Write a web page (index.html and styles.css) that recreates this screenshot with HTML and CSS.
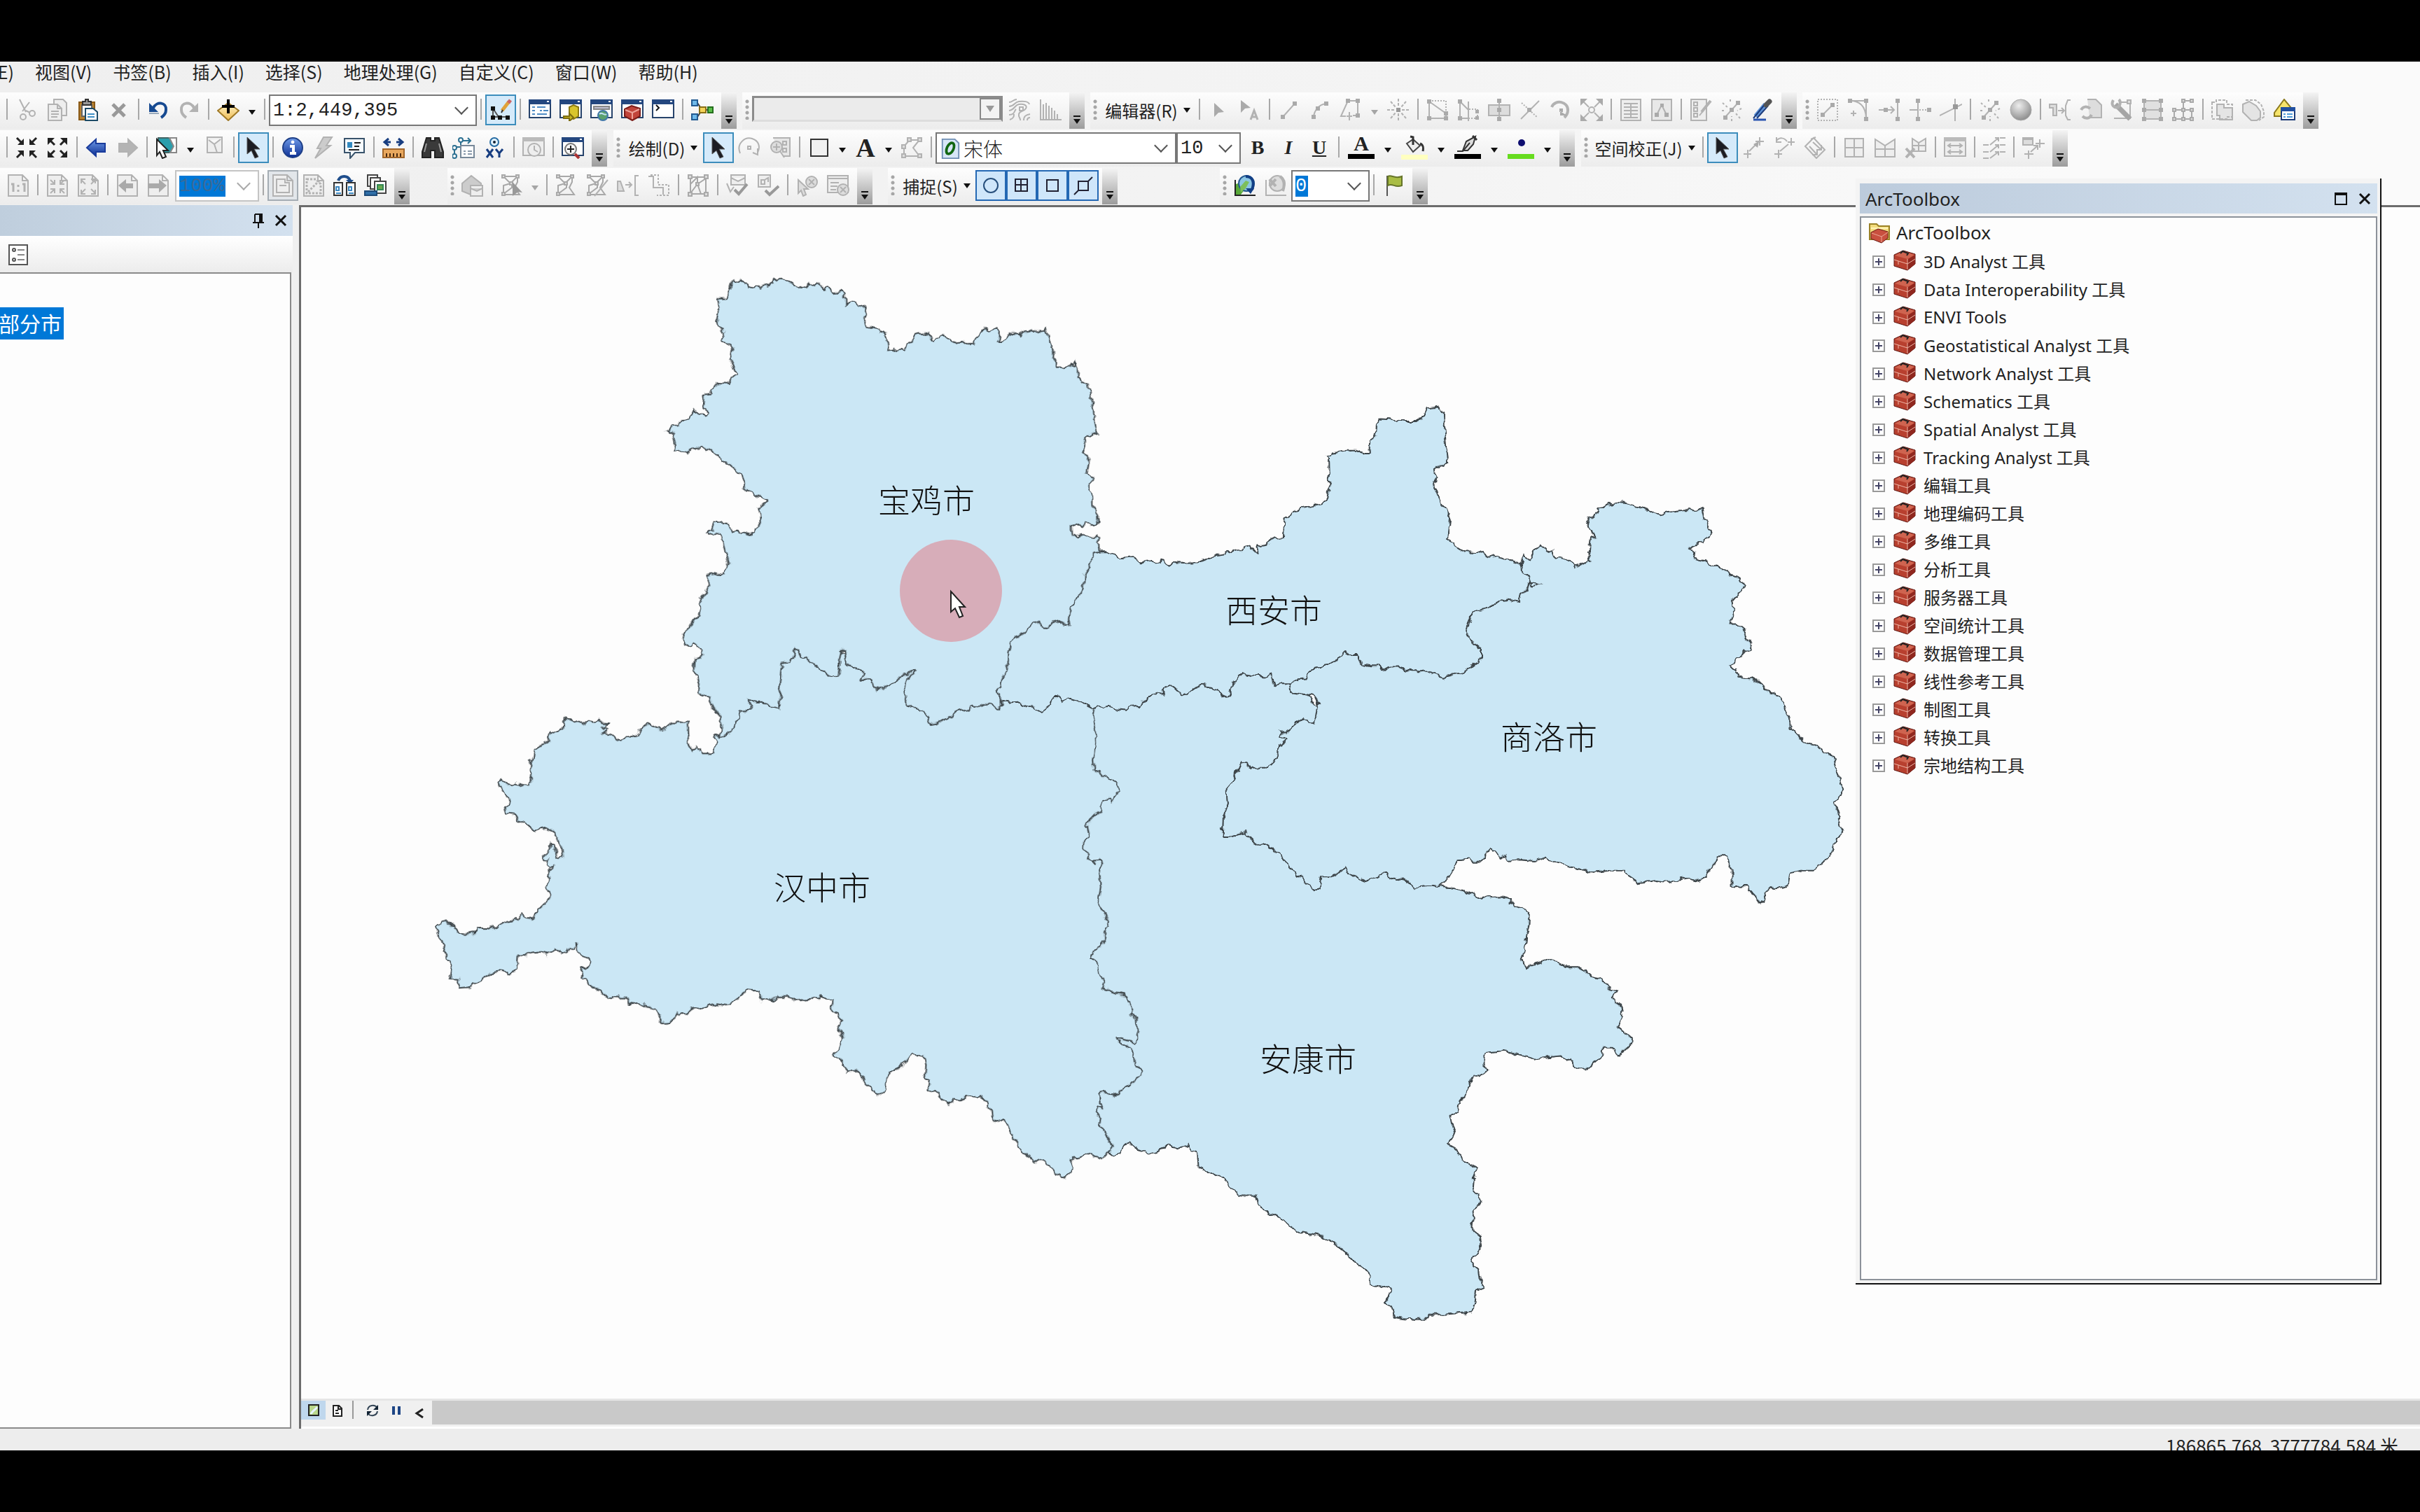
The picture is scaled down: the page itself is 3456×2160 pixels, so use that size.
FILE: index.html
```html
<!DOCTYPE html>
<html lang="zh-CN">
<head>
<meta charset="utf-8">
<title>ArcMap</title>
<link rel="stylesheet" href="styles.css">
</head>
<body>
<svg class="sprite" aria-hidden="true">
<defs>
<linearGradient id="gBlue" x1="0" y1="0" x2="0" y2="1"><stop offset="0" stop-color="#6f9be8"/><stop offset="1" stop-color="#0d2f94"/></linearGradient>
<linearGradient id="gGold" x1="0" y1="0" x2="0" y2="1"><stop offset="0" stop-color="#fff3c8"/><stop offset="1" stop-color="#eebd55"/></linearGradient>
<radialGradient id="gBall" cx=".4" cy=".3" r=".7"><stop offset="0" stop-color="#eee"/><stop offset="1" stop-color="#8e8e8e"/></radialGradient>
</defs>
<symbol id="cut" viewBox="0 0 32 32"><path d="M6 1l9 18M20 5l-10 13"/><circle cx="11" cy="26" r="4"/><circle cx="24" cy="21" r="4"/><path d="M15 17l6 3"/></symbol>
<symbol id="copy" viewBox="0 0 32 32"><path fill="#eee" d="M11 1h13l5 5v18H11z"/><path fill="#eee" d="M3 8h13l6 6v17H3zM16 8v6h6M7 18h11M7 22h11M7 26h9"/></symbol>
<symbol id="paste" viewBox="0 0 32 32"><path fill="#b9822f" stroke="#8a5a18" d="M3 5h22v25H3z"/><path fill="#fff" stroke="#666" d="M7 9h14v16H7z"/><path fill="#999" stroke="#333" d="M8 4h4V1h4v3h4v5H8z"/><path fill="#fff" stroke="#1c4a66" d="M12 14h11l6 5v12H12z"/><path stroke="#3f8fc5" d="M15 22h10M15 26h10"/></symbol>
<symbol id="del" viewBox="0 0 32 32"><path stroke="#999" stroke-width="5" d="M7 8l17 17M24 8L7 25"/></symbol>
<symbol id="undo" viewBox="0 0 32 32"><path stroke="#174a91" stroke-width="4" d="M9 13c5-10 19-8 18 3c0 6-4 9-7 11"/><path fill="#174a91" stroke="none" d="M3 6v13h13z"/><path stroke="#9ab" d="M3 21h14"/></symbol>
<symbol id="redo" viewBox="0 0 32 32"><path stroke-width="4" d="M23 13c-5-10-19-8-18 3c0 6 4 9 7 11"/><path fill="#b2b2b2" stroke="none" d="M29 6v13H16z"/></symbol>
<symbol id="add" viewBox="0 0 32 32"><path fill="url(#gGold)" stroke="#a07a28" d="M16 6l15 11-15 14L1 17z"/><path stroke="#000" stroke-width="4" d="M16 1v20M7 11h18"/></symbol>
<symbol id="edt" viewBox="0 0 32 32"><path stroke="#555" d="M5 14l8 12h14M5 26h8M5 14v12"/><path fill="#111" stroke="none" d="M2 11h6v6H2zM2 24h6v6H2zM12 24h6v6h-6zM23 24h6v6h-6z"/><path stroke="#e0a23a" stroke-width="5" d="M28 4L18 17"/><path stroke="#c66" stroke-width="5" d="M30 2l-3 4"/><path stroke="#333" d="M17 20l2-4"/></symbol>
<symbol id="win" viewBox="0 0 32 32"><path fill="#fff" stroke="#27436b" d="M1 3h30v24H1z"/><path fill="#24477f" stroke="none" d="M0 1h32v7H0z"/><path stroke="#fff" d="M26 4h3"/></symbol>
<symbol id="toc" viewBox="0 0 32 32"><use href="#win" width="32" height="32"/><path stroke="#4d8bc4" d="M5 12h4M12 12h12M5 17h4M16 17h3M21 17h7M5 22h4M12 22h14"/></symbol>
<symbol id="cat" viewBox="0 0 32 32"><use href="#win" width="32" height="32"/><path fill="#d9c52c" stroke="#8c7a12" d="M14 12l6-3 7 3v13l-7 4-6-4z"/><path fill="#c8b820" stroke="#7c6c10" d="M6 25h8v-4l6 6-6 5v-4H6z"/></symbol>
<symbol id="srch" viewBox="0 0 32 32"><use href="#win" width="32" height="32"/><path fill="#bbc" stroke="#888" d="M5 11h22v4H5z"/><circle cx="18" cy="24" r="7" fill="#5aa06f" stroke="#4178a8"/><path stroke="#bfe0f0" d="M13 22c4-4 7 3 10 0"/></symbol>
<symbol id="tbxw" viewBox="0 0 32 32"><use href="#win" width="32" height="32"/><path fill="#c1443a" stroke="#7b1c18" d="M5 15l10-5 12 4v11l-11 6-11-6z"/><path stroke="#eda298" d="M6 16l10 4 10-5M16 20v9"/></symbol>
<symbol id="py" viewBox="0 0 32 32"><use href="#win" width="32" height="32"/><path stroke="#111" d="M6 9l4 4-4 4"/></symbol>
<symbol id="model" viewBox="0 0 32 32"><path stroke="#444" d="M9 6l6 9M9 26l6-9M20 16h4"/><path fill="#6eb9ea" stroke="#235b92" d="M1 2h8v8H1zM1 22h8v8H1z"/><path fill="#f4d35a" stroke="#8a7016" d="M12 12h9v8h-9z"/><path fill="#5cbf4a" stroke="#256e1e" d="M24 12h7v8h-7z"/></symbol>
<symbol id="contour" viewBox="0 0 32 32"><path d="M1 5c5 0 6-4 11-4M1 11c8 0 7-6 14-7s14 0 15 4M1 17c8-1 8-8 14-9s13 1 10 6-9 3-10 8 3 6 2 9M1 23c8 0 7-5 10-8M2 30c6-2 6-5 6-8M16 12h5v5h-5zM22 31c0-6 3-8 9-9M27 31c0-3 1-4 4-4"/></symbol>
<symbol id="hist" viewBox="0 0 32 32"><path d="M2 1v29h30M6 8v22M10 6v24M14 10v20M18 13v17M22 17v13M26 22v8"/></symbol>
<symbol id="play" viewBox="0 0 32 32"><path fill="#aaa" stroke="none" d="M9 6v20l6-6 8-1z"/></symbol>
<symbol id="playA" viewBox="0 0 32 32"><path fill="#aaa" stroke="none" d="M3 2v18l6-6 8-1z"/><path stroke-width="3" d="M17 30l5-13 5 13M19 26h7"/></symbol>
<symbol id="ln" viewBox="0 0 32 32"><path d="M7 26L24 7"/><path fill="#aaa" stroke="none" d="M4 23h6v6H4zM21 4h6v6h-6z"/></symbol>
<symbol id="arc" viewBox="0 0 32 32"><path d="M7 26c1-10 8-18 18-19"/><path fill="#aaa" stroke="none" d="M4 23h6v6H4zM22 4h6v6h-6zM10 11h6v6h-6z"/></symbol>
<symbol id="trap" viewBox="0 0 32 32"><path d="M9 25H2L12 3h14v21h-7M14 19v12M10 25h8"/><path fill="#aaa" stroke="none" d="M9 0h6v6H9zM23 0h6v6h-6zM23 21h6v6h-6z"/></symbol>
<symbol id="spark" viewBox="0 0 32 32"><path stroke-dasharray="4 2" d="M16 0v11M16 21v11M0 16h11M21 16h11M5 4l7 8M27 4l-7 8M5 28l7-8M27 28l-7-8"/><path fill="#999" stroke="none" d="M13 13h6v6h-6z"/></symbol>
<symbol id="shp" viewBox="0 0 32 32"><path d="M4 4l24 17v7H4z"/><path stroke-dasharray="2 2" d="M4 3h24v18"/><path fill="#aaa" stroke="none" d="M1 1h6v6H1zM1 25h6v6H1zM25 18h6v6h-6zM25 25h6v6h-6z"/></symbol>
<symbol id="shp2" viewBox="0 0 32 32"><path d="M4 4l12 12M4 4v24h11M16 4v28"/><path stroke-dasharray="2 2" d="M17 15h12v13H17"/><path fill="#aaa" stroke="none" d="M1 1h6v6H1zM1 25h6v6H1zM26 16h5v5h-5zM26 25h5v5h-5z"/></symbol>
<symbol id="split" viewBox="0 0 32 32"><path fill="#ddd" d="M1 9h30v15H1zM16 3v27"/><path fill="#aaa" stroke="none" d="M13 0h6v6h-6zM13 26h6v6h-6zM13 13h6v6h-6z"/></symbol>
<symbol id="diag" viewBox="0 0 32 32"><path d="M3 29L29 3"/><path stroke-dasharray="2 2" d="M4 6l10 9M18 19l9 8"/><path fill="#aaa" stroke="none" d="M12 13h6v6h-6z"/></symbol>
<symbol id="rot" viewBox="0 0 32 32"><path stroke-width="4" d="M3 12c5-12 24-8 23 5 0 4-2 7-5 10"/><path fill="#aaa" stroke="none" d="M14 14h5v5h-5zM15 24h10l-10-6z"/></symbol>
<symbol id="expand" viewBox="0 0 32 32"><path d="M3 3l9 9M29 3l-9 9M3 29l9-9M29 29l-9-9"/><path fill="#aaa" stroke="none" d="M0 0h10L0 10zM32 0H22l10 10zM0 32h10L0 22zM32 32H22l10-10z"/><circle cx="16" cy="16" r="4"/></symbol>
<symbol id="tbl" viewBox="0 0 32 32"><path fill="#eee" d="M2 1h28v30H2zM6 7h20M6 12h20M6 17h20M6 22h20M6 27h20M16 6v20"/></symbol>
<symbol id="sk" viewBox="0 0 32 32"><path fill="#e8e8e8" d="M2 1h28v30H2zM9 23l7-14 7 14"/><path fill="#aaa" stroke="none" d="M6 20h6v6H6zM20 20h6v6h-6zM14 7h5v5h-5z"/></symbol>
<symbol id="crt" viewBox="0 0 32 32"><path fill="#eee" d="M2 1h22v30H2z"/><path d="M6 5h5v5H6zM6 13h5v5H6zM6 21h5v5H6zM14 24l4-5"/><path stroke-width="4" d="M17 19L30 3"/></symbol>
<symbol id="lns" viewBox="0 0 32 32"><path d="M7 26L25 6"/><path stroke-dasharray="3 3" d="M3 6l8 7M14 1v6M30 14l-6 3M16 32v-7M28 28l-7-8M2 17h6"/><path fill="#aaa" stroke="none" d="M4 24h6v6H4zM22 3h6v6h-6zM13 13h6v6h-6z"/></symbol>
<symbol id="drop" viewBox="0 0 32 32"><path stroke="#5d92d8" stroke-width="6" d="M6 25L20 8"/><path stroke="#1c3c7c" d="M3 28L21 6M8 28L24 10"/><path stroke="#555" stroke-width="7" stroke-linecap="round" d="M21 9l5-5"/><path stroke="#2a55b0" stroke-width="3" d="M3 30h18"/></symbol>
<symbol id="dl" viewBox="0 0 32 32"><path stroke-dasharray="2 2" d="M2 1h28v30H2z"/><path d="M9 23L23 9"/><path fill="#aaa" stroke="none" d="M6 20h6v6H6zM20 6h6v6h-6z"/></symbol>
<symbol id="fil" viewBox="0 0 32 32"><path d="M4 3h23v26M4 3c14 0 22 8 23 24M5 21h8M9 17v8"/><path fill="#aaa" stroke="none" d="M1 0h6v6H1zM24 0h6v6h-6zM24 26h6v6h-6z"/></symbol>
<symbol id="ext" viewBox="0 0 32 32"><path d="M1 16h22M18 11l5 5-5 5M28 3v26"/><path fill="#aaa" stroke="none" d="M25 0h6v6h-6zM25 26h6v6h-6zM8 13h6v6H8z"/></symbol>
<symbol id="trm" viewBox="0 0 32 32"><path d="M1 16h13M13 3v26"/><path stroke-dasharray="2 2" d="M15 16h14"/><path fill="#aaa" stroke="none" d="M10 0h6v6h-6zM10 26h6v6h-6zM26 13h6v6h-6z"/></symbol>
<symbol id="isec" viewBox="0 0 32 32"><path d="M0 24L32 8M22 0v32"/><path fill="#999" stroke="none" d="M19 8h7v7h-7z"/></symbol>
<symbol id="ball" viewBox="0 0 32 32"><circle cx="16" cy="16" r="15" fill="url(#gBall)" stroke="#aaa" stroke-width="1"/></symbol>
<symbol id="aln" viewBox="0 0 32 32"><path fill="#ddd" d="M1 8h10v16H6V13H1z"/><path d="M13 17h8M18 13l4 4-4 4M31 2h-4l-3 8v14l3 6h4"/></symbol>
<symbol id="rep" viewBox="0 0 32 32"><path fill="#ddd" d="M11 1h12l8 8v18H14"/><path stroke-width="4" d="M2 16c3-6 9-5 13-2M17 23c-3 6-9 6-13 2"/></symbol>
<symbol id="wr" viewBox="0 0 32 32"><path d="M5 28h23V5H12"/><path stroke="#a5a5a5" stroke-width="7" d="M7 8l21 21"/><path stroke-width="4" d="M4 2c-4 7 1 12 7 10 4-4 3-9 1-11"/><path fill="#ddd" d="M24 2h5v5h-5z"/></symbol>
<symbol id="box3" viewBox="0 0 32 32"><path fill="#e0e0e0" d="M4 3h24v26H4zM4 16h24"/><path fill="#aaa" stroke="none" d="M1 0h6v6H1zM25 0h6v6h-6zM1 13h6v6H1zM25 13h6v6h-6zM1 26h6v6H1zM25 26h6v6h-6z"/></symbol>
<symbol id="net" viewBox="0 0 32 32"><path stroke="#aaa" d="M3 16h25v13H3zM16 3v26M16 3h12"/><path fill="#ddd" stroke="#aaa" d="M1 14h4v4H1zM1 27h4v4H1zM14 14h4v4h-4zM14 27h4v4h-4zM26 14h4v4h-4zM26 27h4v4h-4zM14 1h4v4h-4zM26 1h4v4h-4z"/></symbol>
<symbol id="un" viewBox="0 0 32 32"><path fill="#e4e4e4" d="M8 8h10v5h12v17H12v-6H8z"/><path stroke-dasharray="4 2" d="M1 5h6V2h15v6h8v18h-8v3H1z"/></symbol>
<symbol id="hex" viewBox="0 0 32 32"><path fill="#e4e4e4" d="M1 8l9-4 10 6 6 8v9l-5 4h-8L1 19z"/><path stroke-dasharray="4 2" d="M5 2h14l8 6 4 10v8l-7 5"/></symbol>
<symbol id="house" viewBox="0 0 32 32"><path fill="#f6e46c" stroke="#8c7a1c" d="M16 1L2 20v5h24V13z"/><path fill="#fff" stroke="#1c3b78" d="M12 14h19v16H12z"/><path fill="#2150a0" stroke="none" d="M11 12h21v6H11z"/><path stroke="#4d9bd8" d="M15 22h3M20 22h8M15 26h3M20 26h8"/></symbol>
<symbol id="zin" viewBox="0 0 32 32"><path stroke="#222" stroke-width="3" d="M2 2l8 8M30 2l-8 8M2 30l8-8M30 30l-8-8"/><path fill="#222" stroke="none" d="M12 3v9H3zM20 3v9h9zM12 29v-9H3zM20 29v-9h9z"/></symbol>
<symbol id="zout" viewBox="0 0 32 32"><path stroke="#222" stroke-width="3" d="M4 4l8 8M28 4l-8 8M4 28l8-8M28 28l-8-8"/><path fill="#222" stroke="none" d="M2 2h10L2 12zM30 2H20l10 10zM2 30h10L2 20zM30 30H20l10-10z"/></symbol>
<symbol id="back" viewBox="0 0 32 32"><path fill="url(#gBlue)" stroke="#1a3c9c" d="M2 16L15 4v6h13v12H15v6z"/></symbol>
<symbol id="fwd" viewBox="0 0 32 32"><path fill="#b4b4b4" d="M30 16L17 4v6H4v12h13v6z"/></symbol>
<symbol id="self" viewBox="0 0 32 32"><path fill="#2b9eac" stroke="#466" d="M4 2h26v21H4z"/><path fill="#fff" stroke="#888" d="M20 2h10v21h-9l5-9z"/><path fill="#fff" stroke="#222" d="M2 4l16 16h-7l4 9-5 2-4-9-4 5z"/></symbol>
<symbol id="clr" viewBox="0 0 32 32"><path fill="#eee" d="M6 1h21v22H6zM8 5l8 6 9-7M16 11l4 12"/></symbol>
<symbol id="cur" viewBox="0 0 32 32"><path fill="#1c1c22" stroke="#555" stroke-width="1" d="M7 1l18 17h-8l6 11-5 2-5-11-6 5z"/></symbol>
<symbol id="info" viewBox="0 0 32 32"><circle cx="16" cy="16" r="14" fill="url(#gBlue)" stroke="#1e3f87"/><path stroke="#fff" stroke-width="4" d="M12 14h5v9M12 24h9"/><circle cx="16" cy="8" r="2" fill="#fff" stroke="#fff" stroke-width="1"/></symbol>
<symbol id="bolt" viewBox="0 0 32 32"><path fill="#ccc" d="M16 1h12l-8 12h6L4 31l8-14H7z"/></symbol>
<symbol id="pop" viewBox="0 0 32 32"><path fill="#f5faff" stroke="#39536b" d="M2 3h28v20H17l-7 8v-8H2z"/><path fill="#338ac0" stroke="none" d="M6 8h7v8H6z"/><path stroke="#222" d="M16 9h9M16 14h7M8 19h15"/></symbol>
<symbol id="meas" viewBox="0 0 32 32"><path fill="#e9a85e" stroke="#a0662c" d="M1 18h30v12H1z"/><path stroke="#4a2a10" d="M6 29v-5M11 29v-5M16 29v-5M21 29v-5M26 29v-5"/><path stroke="#173d80" stroke-width="3" d="M4 8h8M20 8h8M9 3L3 8l6 5M23 3l6 5-6 5"/></symbol>
<symbol id="bino" viewBox="0 0 32 32"><path fill="#3a3a3a" stroke="#222" d="M7 2h6v4h6V2h6l6 20v8H19V20h-6v10H1v-8z"/><path stroke="#999" d="M7 10L4 22M25 10l3 12"/></symbol>
<symbol id="route" viewBox="0 0 32 32"><path stroke="#2c7091" d="M3 28V15h9V6h14M22 2l4 4-4 4"/><circle cx="3" cy="28" r="3" fill="#fff" stroke="#2c7091"/><circle cx="3" cy="16" r="3" fill="#fff" stroke="#2c7091"/><circle cx="12" cy="5" r="3" fill="#fff" stroke="#2c7091"/><path fill="#fff" stroke="#789" d="M12 13h19v17H12z"/><path stroke="#89a" d="M16 21h3M22 21h6M16 25h3M22 25h6"/></symbol>
<symbol id="xy" viewBox="0 0 32 32"><circle cx="16" cy="8" r="6" fill="#e2f3ff" stroke="#276ca3"/><circle cx="16" cy="8" r="1" stroke="#123"/><path stroke="#173d80" stroke-width="3" d="M5 18l9 12M14 18L5 30M18 18l5 6 5-6M23 24v6"/></symbol>
<symbol id="clk" viewBox="0 0 32 32"><path fill="#eee" d="M1 3h30v24H1z"/><path fill="#bbb" stroke="none" d="M0 1h32v6H0z"/><circle cx="17" cy="19" r="9" fill="#eee"/><path d="M17 13v6l5 3"/></symbol>
<symbol id="mag" viewBox="0 0 32 32"><use href="#win" width="32" height="32"/><circle cx="13" cy="18" r="8" fill="#f6f6f6" stroke="#777"/><path stroke="#222" d="M13 13v10M8 18h10"/><path stroke="#a33" stroke-width="4" d="M19 25l6 6"/></symbol>
<symbol id="rot2" viewBox="0 0 32 32"><path d="M3 24C-3 10 10 0 20 3s12 12 8 20M28 17v9l-7-3M14 14h4v4h-4z"/></symbol>
<symbol id="zsel" viewBox="0 0 32 32"><path fill="#e6e6e6" d="M6 2h24v26H20"/><path d="M20 7h5v5h-5zM20 17h5v5h-5z"/><circle cx="11" cy="15" r="8" fill="#ddd"/><path d="M11 10v10M6 15h10M16 21l6 9"/></symbol>
<symbol id="rect" viewBox="0 0 32 32"><path fill="#f1f1f1" stroke="#333" d="M4 4h24v24H4z"/></symbol>
<symbol id="vtx" viewBox="0 0 32 32"><path d="M13 5h15M13 5L5 14v14h22l-9-12 9-11"/><path fill="#ddd" d="M10 2h5v5h-5zM25 2h5v5h-5zM2 12h5v5H2zM2 25h5v5H2zM25 25h5v5h-5z"/></symbol>
<symbol id="fnt" viewBox="0 0 32 32"><path fill="#d7e6f7" stroke="#6f8eb4" d="M4 2h19l6 6v23H4z"/><ellipse cx="16" cy="16" rx="5" ry="9" stroke="#161" stroke-width="4" transform="rotate(25 16 16)"/></symbol>
<symbol id="bkt" viewBox="0 0 40 36"><path fill="#ffffc0" stroke="none" d="M1 28h38v7H1z"/><path fill="#eee" stroke="#444" d="M9 12l9-6 10 9-10 9z"/><path stroke="#333" stroke-width="3" d="M18 14V3l-4-1M28 12c5 2 5 6 4 11"/></symbol>
<symbol id="pen" viewBox="0 0 40 36"><path fill="#000" stroke="none" d="M1 27h38v7H1z"/><path fill="#ddd" stroke="#333" d="M13 22l5-13 13-7-3 11-8 9z"/><path stroke="#333" d="M5 23h8l10-12"/><path stroke="#333" stroke-width="3" d="M27 1l6 6"/></symbol>
<symbol id="dot" viewBox="0 0 40 36"><path fill="#66dc1e" stroke="none" d="M1 27h38v7H1z"/><circle cx="21" cy="11" r="5" fill="#0e0e70" stroke="none"/></symbol>
<symbol id="fcol" viewBox="0 0 40 36"><path fill="#000" stroke="none" d="M1 27h38v7H1z"/></symbol>
<symbol id="lk1" viewBox="0 0 32 32"><path d="M2 25h11M8 19v12M19 7h12M25 1v12M10 21L22 9"/><path fill="#aaa" stroke="none" d="M24 7l-2 9-6-5z"/></symbol>
<symbol id="lk2" viewBox="0 0 32 32"><path d="M2 25h11M8 19v12M21 8h10M26 2v11M10 21L22 11M5 6c4-5 11-5 15 1M5 1v7h7"/></symbol>
<symbol id="lk3" viewBox="0 0 32 32"><path d="M10 4l7-3M2 14L14 2l16 17-12 12zM8 14l11 12M13 8l12 11M19 19v7h-7M25 12v7h-7"/></symbol>
<symbol id="g4" viewBox="0 0 32 32"><path fill="#eee" d="M3 3h26v26H3zM16 3v26M3 16h26"/></symbol>
<symbol id="g5" viewBox="0 0 32 32"><path fill="#eee" d="M2 4l14 9L30 4v25H2zM16 13v16M2 18h28"/></symbol>
<symbol id="g6" viewBox="0 0 32 32"><path fill="#eee" d="M11 3l9 6 10-6v18H11zM20 9v12M11 13h19"/><path stroke-width="4" d="M2 17l12 13M14 17L2 30"/></symbol>
<symbol id="lkt" viewBox="0 0 32 32"><path fill="#eee" d="M1 3h30v25H1z"/><path fill="#bbb" stroke="none" d="M0 1h32v6H0z"/><path d="M6 13h20M10 10l-4 3 4 3M22 10l4 3-4 3M6 22h20M10 19l-4 3 4 3M22 19l4 3-4 3"/></symbol>
<symbol id="em" viewBox="0 0 32 32"><path d="M0 12h8M24 2h8M0 22h8M24 12h8M0 31h8M24 22h8M10 12L22 2M10 22l12-10M10 31l12-9M17 2h5v5M17 12h5v5M17 22h5v5"/></symbol>
<symbol id="at" viewBox="0 0 32 32"><path fill="#ddd" d="M1 2h14v10H1z"/><path d="M1 4h14M25 4v12M19 10h13M3 25h13M9 20v12M12 22l9-8M16 13h6v6"/></symbol>
<symbol id="pg" viewBox="0 0 32 32"><path fill="#eee" d="M2 1h20l8 8v22H2zM22 1v8h8"/></symbol>
<symbol id="p11" viewBox="0 0 32 32"><use href="#pg" width="32" height="32"/><path stroke-width="3" d="M6 14h3v11M22 14h3v11M16 15v3M16 22v3"/></symbol>
<symbol id="pin" viewBox="0 0 32 32"><use href="#pg" width="32" height="32"/><path d="M6 8l6 6M26 8l-6 6M6 27l6-6M26 27l-6-6M6 14h6V8M20 8v6h6M6 21h6v6M20 27v-6h6"/></symbol>
<symbol id="pout" viewBox="0 0 32 32"><use href="#pg" width="32" height="32"/><path d="M6 8l6 6M26 8l-6 6M6 27l6-6M26 27l-6-6M6 13V7h6M20 7h6v6M6 22v6h6M20 28h6v-6"/></symbol>
<symbol id="pbk" viewBox="0 0 32 32"><use href="#pg" width="32" height="32"/><path fill="#aaa" stroke="none" d="M3 16l11-9v6h10v7H14v6z"/></symbol>
<symbol id="pfw" viewBox="0 0 32 32"><use href="#pg" width="32" height="32"/><path fill="#aaa" stroke="none" d="M28 16L17 7v6H1v7h16v6z"/></symbol>
<symbol id="pdr" viewBox="0 0 32 32"><use href="#pg" width="32" height="32"/><path d="M7 7h12v5h6v14H7zM11 16h10"/></symbol>
<symbol id="pfc" viewBox="0 0 32 32"><use href="#pg" width="32" height="32"/><path stroke-dasharray="3 2" stroke-width="3" d="M6 7h13l7 7v13H6zM8 25L24 9"/></symbol>
<symbol id="chl" viewBox="0 0 32 32"><path stroke="#1f4e8c" stroke-width="4" d="M7 9c3-8 14-8 17 0"/><path fill="#1f4e8c" stroke="none" d="M18 8h11l-5 6z"/><path fill="#fff" stroke="#333" d="M1 12h12v18H1zM19 12h12v18H19z"/><path stroke="#3a86c0" d="M4 18h4v5H4zM22 18h4v5h-4zM4 27h7M22 27h7"/></symbol>
<symbol id="ddp" viewBox="0 0 32 32"><path fill="#fff" stroke="#444" d="M5 1h14v16H5z"/><path fill="#fff" stroke="#444" d="M9 5h14v16H9z"/><path fill="#fff" stroke="#444" d="M15 10h16v17H15z"/><path fill="#6aa84f" stroke="#385" d="M19 15h8v7h-8z"/><path fill="#2f6fa8" stroke="#1c4a78" d="M1 24h17v6H1z"/></symbol>
<symbol id="topo" viewBox="0 0 32 32"><path fill="#ccc" d="M1 13L14 2l14 11v15l-10 3L1 24z"/><path fill="#eee" d="M13 16h17v15H13zM13 20l9 4 8-4"/></symbol>
<symbol id="mesh" viewBox="0 0 32 32"><path stroke="#a8a8a8" d="M4 3h20v8l-4 8 7 10H4V16L14 13 4 3M14 13l9-9M4 28l12-9V13"/><path fill="#ddd" stroke="#aaa" d="M2 1h4v4H2zM22 1h4v4h-4zM2 26h4v4H2zM13 11h4v4h-4z"/></symbol>
<symbol id="mshc" viewBox="0 0 32 32"><use href="#mesh" width="32" height="32"/><path fill="#999" stroke="none" d="M17 11l14 15-6-1-8 6z"/></symbol>
<symbol id="msh2" viewBox="0 0 32 32"><use href="#mesh" width="32" height="32"/><path d="M12 31L31 8"/></symbol>
<symbol id="aln2" viewBox="0 0 32 32"><path fill="#ddd" d="M1 24V10h4l5 14z"/><path d="M12 15h9M17 11l4 4-4 4M31 2h-5v28h5"/></symbol>
<symbol id="corner" viewBox="0 0 32 32"><path d="M1 3h7v16h14v10"/><path stroke-dasharray="3 2" d="M4 1h11v14h15v15H13"/></symbol>
<symbol id="topo2" viewBox="0 0 32 32"><path stroke="#a8a8a8" d="M5 4h22v24H5zM5 14l10-10v10L5 27M15 14l12-8M15 14l5 14"/><path fill="#ddd" stroke="#aaa" d="M2 1h5v5H2zM25 1h5v5h-5zM2 26h5v5H2zM25 26h5v5h-5zM13 12h4v4h-4z"/></symbol>
<symbol id="val" viewBox="0 0 32 32"><path fill="#eee" d="M7 1h20v14H7zM7 5l10 5 10-5"/><path d="M1 13l5 12 5-7"/><path stroke="#999" stroke-width="4" d="M12 22l6 6L30 14"/></symbol>
<symbol id="val2" viewBox="0 0 32 32"><path fill="#eee" d="M2 1h17v17H2zM6 8h5v6H6zM11 8l5-3v6"/><path stroke="#999" stroke-width="4" d="M12 23l6 6L31 17"/></symbol>
<symbol id="fix" viewBox="0 0 32 32"><path fill="#ddd" d="M3 8l14 13h-6l3 8-4 2-3-8-4 4z"/><circle cx="22" cy="11" r="8" fill="#ddd"/><path d="M18 7l8 8M26 7l-8 8"/></symbol>
<symbol id="insp" viewBox="0 0 32 32"><path fill="#eee" d="M1 2h29v24H1zM1 6h29M5 12h12M5 17h10M5 22h8"/><circle cx="23" cy="22" r="8" fill="#ddd"/><path d="M19 18l8 8M27 18l-8 8"/></symbol>
<symbol id="s1" viewBox="0 0 32 32"><circle cx="16" cy="16" r="10" stroke="#274f7c"/></symbol>
<symbol id="s2" viewBox="0 0 32 32"><path stroke="#223" d="M7 7h17v17H7zM15 7v17M7 15h17"/></symbol>
<symbol id="s3" viewBox="0 0 32 32"><path stroke="#223" d="M8 8h16v16H8z"/></symbol>
<symbol id="s4" viewBox="0 0 32 32"><path stroke="#223" d="M9 10h14v13H9zM3 29l6-6M23 10l6-6"/></symbol>
<symbol id="geo" viewBox="0 0 32 32"><path stroke="#222" d="M2 8v22h29"/><path fill="#58a839" stroke="none" d="M3 14l12-4 3 8-8 11H3z"/><circle cx="18" cy="13" r="11" fill="#8cc7e4" stroke="#24588f"/><path fill="#7dbf5c" stroke="none" d="M9 18l8-9 5 2-5 9-7 6z"/><path stroke="#123f86" stroke-width="4" d="M17 3c10 0 13 8 9 19"/><path fill="#123f86" stroke="none" d="M17 20h12l-5 8z"/></symbol>
<symbol id="geo2" viewBox="0 0 32 32"><path d="M2 8v22h29"/><circle cx="18" cy="13" r="11" fill="#ddd"/><path stroke-width="4" d="M7 7l9 10M16 7L7 17M22 3c7 5 7 12 4 21"/></symbol>
<symbol id="flag" viewBox="0 0 32 32"><path stroke="#555" d="M7 2v29"/><path fill="#a9bd45" stroke="#66752a" d="M8 3c6-3 8 4 20 0v13c-10 4-13-4-20 0z"/></symbol>
<symbol id="tbx" viewBox="0 0 32 32"><path fill="#b8402f" stroke="#5f1712" stroke-width="1" d="M1 8l13-6 17 5v14L20 30 1 24z"/><path fill="#cf6450" stroke="none" d="M2 9l12-6 16 5-10 6z"/><path fill="#8f271e" stroke="none" d="M20 15l11-7v13l-11 9z"/><path stroke="#f0b6a7" stroke-width="1" d="M1 15l19 6 11-7M20 14v15M7 17v5"/><path stroke="#222" d="M10 6l3-3 8 3-2 3"/></symbol>
<symbol id="tbf" viewBox="0 0 32 32"><path fill="#f3dc7d" stroke="#9b8227" d="M2 26V4h10l3 3h15v19z"/><path stroke="#fff3b8" d="M4 10h24"/><path fill="#c9503f" stroke="#6b1b14" stroke-width="1" d="M4 16l10-5 14 4v9l-9 7L4 25z"/><path stroke="#eba999" stroke-width="1" d="M5 17l14 5 9-6M19 22v8"/></symbol>
</svg>

<div class="stage">
<div class="app">
<nav class="menu">
<a class="first" href="#">编辑(E)</a><a href="#">视图(V)</a><a href="#">书签(B)</a><a href="#">插入(I)</a><a href="#">选择(S)</a><a href="#">地理处理(G)</a><a href="#">自定义(C)</a><a href="#">窗口(W)</a><a href="#">帮助(H)</a>
</nav>

<div class="dock">
<div class="row">
<div class="bar lead">
<i class="sep"></i>
<button class="b" aria-label="剪切"><svg><use href="#cut"/></svg></button><button class="b" aria-label="复制"><svg><use href="#copy"/></svg></button><button class="b" aria-label="粘贴"><svg><use href="#paste"/></svg></button><button class="b" aria-label="删除"><svg><use href="#del"/></svg></button>
<i class="sep"></i>
<button class="b" aria-label="撤销"><svg><use href="#undo"/></svg></button><button class="b" aria-label="恢复"><svg><use href="#redo"/></svg></button>
<i class="sep"></i>
<button class="b" aria-label="添加数据"><svg><use href="#add"/></svg></button><button class="dd" aria-label="更多"></button>
<i class="sep"></i>
<div class="combo scale"><input aria-label="比例" value="1:2,449,395"><button class="chev" aria-label="展开"></button></div>
<i class="sep"></i>
<button class="b on" aria-label="编辑器工具条"><svg><use href="#edt"/></svg></button>
<i class="sep"></i>
<button class="b" aria-label="内容列表"><svg><use href="#toc"/></svg></button><button class="b" aria-label="目录"><svg><use href="#cat"/></svg></button><button class="b" aria-label="搜索"><svg><use href="#srch"/></svg></button><button class="b" aria-label="工具箱"><svg><use href="#tbxw"/></svg></button><button class="b" aria-label="Python"><svg><use href="#py"/></svg></button>
<i class="sep"></i>
<button class="b" aria-label="模型构建器"><svg><use href="#model"/></svg></button>
<button class="over" aria-label="选项"></button>
</div>
<div class="bar">
<i class="grip"></i>
<div class="combo layer"><input aria-label="图层" value="" disabled><button class="drop" aria-label="展开"></button></div>
<button class="b" aria-label="等值线"><svg><use href="#contour"/></svg></button><button class="b" aria-label="直方图"><svg><use href="#hist"/></svg></button>
<button class="over" aria-label="选项"></button>
</div>
<div class="bar">
<i class="grip"></i>
<button class="txt editor">编辑器(R)</button>
<i class="sep"></i>
<button class="b" aria-label="编辑"><svg><use href="#play"/></svg></button><button class="b" aria-label="编辑注记"><svg><use href="#playA"/></svg></button>
<i class="sep"></i>
<button class="b" aria-label="直线段"><svg><use href="#ln"/></svg></button><button class="b" aria-label="弧段"><svg><use href="#arc"/></svg></button><button class="b" aria-label="追踪"><svg><use href="#trap"/></svg></button><button class="dd dim" aria-label="更多"></button><button class="b" aria-label="点"><svg><use href="#spark"/></svg></button>
<i class="sep"></i>
<button class="b" aria-label="编辑折点"><svg><use href="#shp"/></svg></button><button class="b" aria-label="整形"><svg><use href="#shp2"/></svg></button><button class="b" aria-label="裁剪面"><svg><use href="#split"/></svg></button><button class="b" aria-label="分割"><svg><use href="#diag"/></svg></button><button class="b" aria-label="旋转"><svg><use href="#rot"/></svg></button><button class="b" aria-label="比例缩放"><svg><use href="#expand"/></svg></button>
<i class="sep"></i>
<button class="b" aria-label="属性"><svg><use href="#tbl"/></svg></button><button class="b" aria-label="草图属性"><svg><use href="#sk"/></svg></button>
<i class="sep"></i>
<button class="b" aria-label="创建要素"><svg><use href="#crt"/></svg></button><button class="b" aria-label="构造"><svg><use href="#lns"/></svg></button><button class="b" aria-label="吸管"><svg><use href="#drop"/></svg></button>
<button class="over" aria-label="选项"></button>
</div>
<div class="bar">
<i class="grip"></i>
<button class="b" aria-label="线"><svg><use href="#dl"/></svg></button><button class="b" aria-label="内圆角"><svg><use href="#fil"/></svg></button><button class="b" aria-label="延伸"><svg><use href="#ext"/></svg></button><button class="b" aria-label="修剪"><svg><use href="#trm"/></svg></button><button class="b" aria-label="相交"><svg><use href="#isec"/></svg></button>
<i class="sep"></i>
<button class="b" aria-label="打断"><svg><use href="#lns"/></svg></button><button class="b" aria-label="球体"><svg><use href="#ball"/></svg></button>
<i class="sep"></i>
<button class="b" aria-label="对齐形状"><svg><use href="#aln"/></svg></button><button class="b" aria-label="替换几何"><svg><use href="#rep"/></svg></button><button class="b" aria-label="修复"><svg><use href="#wr"/></svg></button><button class="b" aria-label="构造面"><svg><use href="#box3"/></svg></button><button class="b" aria-label="分割面"><svg><use href="#net"/></svg></button>
<i class="sep"></i>
<button class="b" aria-label="联合"><svg><use href="#un"/></svg></button><button class="b" aria-label="概化"><svg><use href="#hex"/></svg></button><button class="b" aria-label="建筑物"><svg><use href="#house"/></svg></button>
<button class="over" aria-label="选项"></button>
</div>
</div>

<div class="row second">
<div class="bar lead">
<i class="sep"></i>
<button class="b" aria-label="固定比例放大"><svg><use href="#zin"/></svg></button><button class="b" aria-label="固定比例缩小"><svg><use href="#zout"/></svg></button>
<i class="sep"></i>
<button class="b" aria-label="后退"><svg><use href="#back"/></svg></button><button class="b" aria-label="前进"><svg><use href="#fwd"/></svg></button>
<i class="sep"></i>
<button class="b" aria-label="选择要素"><svg><use href="#self"/></svg></button><button class="dd" aria-label="更多"></button><button class="b" aria-label="清除"><svg><use href="#clr"/></svg></button>
<i class="sep"></i>
<button class="b on" aria-label="选择元素"><svg><use href="#cur"/></svg></button>
<i class="sep"></i>
<button class="b" aria-label="识别"><svg><use href="#info"/></svg></button><button class="b" aria-label="超链接"><svg><use href="#bolt"/></svg></button><button class="b" aria-label="弹出窗口"><svg><use href="#pop"/></svg></button>
<i class="sep"></i>
<button class="b" aria-label="测量"><svg><use href="#meas"/></svg></button>
<i class="sep"></i>
<button class="b" aria-label="查找"><svg><use href="#bino"/></svg></button><button class="b" aria-label="查找路径"><svg><use href="#route"/></svg></button><button class="b" aria-label="转到 XY"><svg><use href="#xy"/></svg></button>
<i class="sep"></i>
<button class="b" aria-label="时间滑块"><svg><use href="#clk"/></svg></button>
<i class="sep"></i>
<button class="b" aria-label="查看器"><svg><use href="#mag"/></svg></button>
<button class="over" aria-label="选项"></button>
</div>
<div class="bar">
<i class="grip"></i>
<button class="txt draw">绘制(D)</button>
<button class="b on" aria-label="选择元素"><svg><use href="#cur"/></svg></button><button class="b" aria-label="旋转"><svg><use href="#rot2"/></svg></button><button class="b" aria-label="缩放到元素"><svg><use href="#zsel"/></svg></button>
<i class="sep"></i>
<button class="b" aria-label="矩形"><svg><use href="#rect"/></svg></button><button class="dd slim" aria-label="更多"></button><button class="b serif big">A</button><button class="dd slim" aria-label="更多"></button><button class="b" aria-label="编辑折点"><svg><use href="#vtx"/></svg></button>
<i class="sep"></i>
<div class="combo font"><svg><use href="#fnt"/></svg><input aria-label="字体" value="宋体"><button class="chev" aria-label="展开"></button></div>
<div class="combo size"><input aria-label="字号" value="10"><button class="chev" aria-label="展开"></button></div>
<button class="b serif">B</button><button class="b serif it">I</button><button class="b serif un">U</button>
<i class="sep"></i>
<button class="wide serif"><span>A</span><svg><use href="#fcol"/></svg></button><button class="dd" aria-label="更多"></button>
<button class="wide" aria-label="填充颜色"><svg><use href="#bkt"/></svg></button><button class="dd" aria-label="更多"></button>
<button class="wide" aria-label="线颜色"><svg><use href="#pen"/></svg></button><button class="dd" aria-label="更多"></button>
<button class="wide" aria-label="标记颜色"><svg><use href="#dot"/></svg></button><button class="dd" aria-label="更多"></button>
<button class="over" aria-label="选项"></button>
</div>
<div class="bar">
<i class="grip"></i>
<button class="txt adjust">空间校正(J)</button>
<i class="sep"></i>
<button class="b on" aria-label="选择要素"><svg><use href="#cur"/></svg></button><button class="b" aria-label="新建位移链接"><svg><use href="#lk1"/></svg></button><button class="b" aria-label="修改链接"><svg><use href="#lk2"/></svg></button><button class="b" aria-label="多位移链接"><svg><use href="#lk3"/></svg></button>
<i class="sep"></i>
<button class="b" aria-label="标识链接"><svg><use href="#g4"/></svg></button><button class="b" aria-label="受限校正"><svg><use href="#g5"/></svg></button><button class="b" aria-label="清除受限"><svg><use href="#g6"/></svg></button>
<i class="sep"></i>
<button class="b" aria-label="链接表"><svg><use href="#lkt"/></svg></button>
<i class="sep"></i>
<button class="b" aria-label="边匹配"><svg><use href="#em"/></svg></button>
<i class="sep"></i>
<button class="b" aria-label="属性传递"><svg><use href="#at"/></svg></button>
<button class="over" aria-label="选项"></button>
</div>
</div>

<div class="row">
<div class="bar lead">
<button class="b" aria-label="1:1"><svg><use href="#p11"/></svg></button>
<i class="sep"></i>
<button class="b" aria-label="放大"><svg><use href="#pin"/></svg></button><button class="b" aria-label="缩小"><svg><use href="#pout"/></svg></button>
<i class="sep"></i>
<button class="b" aria-label="上一页"><svg><use href="#pbk"/></svg></button><button class="b" aria-label="下一页"><svg><use href="#pfw"/></svg></button>
<div class="combo pct"><input class="picked" aria-label="缩放" value="100%"><button class="chev" aria-label="展开"></button></div>
<i class="sep"></i>
<button class="b held" aria-label="草稿模式"><svg><use href="#pdr"/></svg></button><button class="b" aria-label="焦点数据框"><svg><use href="#pfc"/></svg></button><button class="b" aria-label="更改布局"><svg><use href="#chl"/></svg></button><button class="b" aria-label="数据驱动页面"><svg><use href="#ddp"/></svg></button>
<button class="over" aria-label="选项"></button>
</div>
<div class="bar away">
<i class="grip"></i>
<button class="b" aria-label="选择拓扑"><svg><use href="#topo"/></svg></button>
<i class="sep"></i>
<button class="b" aria-label="拓扑编辑"><svg><use href="#mshc"/></svg></button><button class="dd dim slim" aria-label="更多"></button>
<i class="sep"></i>
<button class="b" aria-label="修改边"><svg><use href="#mesh"/></svg></button><button class="b" aria-label="修整边"><svg><use href="#msh2"/></svg></button><button class="b" aria-label="对齐边"><svg><use href="#aln2"/></svg></button><button class="b" aria-label="概化边"><svg><use href="#corner"/></svg></button>
<i class="sep"></i>
<button class="b" aria-label="共享要素"><svg><use href="#topo2"/></svg></button>
<i class="sep"></i>
<button class="b" aria-label="验证区域"><svg><use href="#val"/></svg></button><button class="b" aria-label="验证范围"><svg><use href="#val2"/></svg></button>
<i class="sep"></i>
<button class="b" aria-label="修复错误"><svg><use href="#fix"/></svg></button><button class="b" aria-label="错误检查器"><svg><use href="#insp"/></svg></button>
<button class="over" aria-label="选项"></button>
</div>
<div class="bar snap">
<i class="grip"></i>
<button class="txt catch">捕捉(S)</button>
<button class="b on blue" aria-label="点捕捉"><svg><use href="#s1"/></svg></button><button class="b on blue" aria-label="端点捕捉"><svg><use href="#s2"/></svg></button><button class="b on blue" aria-label="折点捕捉"><svg><use href="#s3"/></svg></button><button class="b on blue" aria-label="边捕捉"><svg><use href="#s4"/></svg></button>
<button class="over" aria-label="选项"></button>
</div>
<div class="bar georef">
<i class="grip"></i>
<button class="b" aria-label="启动"><svg><use href="#geo"/></svg></button><button class="b" aria-label="停止"><svg><use href="#geo2"/></svg></button>
<div class="combo num"><input class="picked light" aria-label="值" value="0"><button class="chev" aria-label="展开"></button></div>
<i class="sep"></i>
<button class="b" aria-label="标记"><svg><use href="#flag"/></svg></button>
<button class="over" aria-label="选项"></button>
</div>
</div>
</div>

<div class="work">
<aside class="toc">
<header class="cap">
<button aria-label="固定"><svg viewBox="0 0 20 24"><path fill="none" stroke="#111" stroke-width="2" d="M5 3h10v12M5 3v12M2 15h16M10 15v8"/><path fill="#111" d="M11 3h5v12h-5z"/></svg></button>
<button aria-label="关闭"><svg viewBox="0 0 20 24"><path fill="none" stroke="#111" stroke-width="3" d="M3 5l14 14M17 5L3 19"/></svg></button>
</header>
<div class="tools"><button aria-label="选项"><svg viewBox="0 0 28 30"><path fill="#fff" stroke="#555" stroke-width="2" d="M1 1h26v28H1z"/><g fill="none" stroke="#555" stroke-width="2"><circle cx="8" cy="8" r="2"/><circle cx="8" cy="22" r="2"/><path stroke="#888" d="M13 8h10M13 15h10M13 22h10"/></g></svg></button></div>
<div class="tree"><span class="sel">部分市</span></div>
</aside>

<main class="view">
<svg class="map" viewBox="430 296 3026 1702" preserveAspectRatio="xMinYMin slice">
<defs>
<filter id="coast" x="-5%" y="-5%" width="110%" height="110%" color-interpolation-filters="sRGB"><feTurbulence type="fractalNoise" baseFrequency=".09" numOctaves="2" seed="4"/><feDisplacementMap in="SourceGraphic" scale="10" xChannelSelector="R" yChannelSelector="G"/></filter>
</defs>
<!-- later regions cover the rough inner edges of earlier ones -->
<g class="land" filter="url(#coast)">
<path transform="translate(1500 560) scale(.7398 .8546)" d="M750,826 778,830 800,834 832,846 870,844 884,850 904,860 926,868 924,890 918,912 914,936 908,948 918,962 932,958 950,954 956,946 968,950 984,954 996,962 1020,962 1034,968 1044,976 1062,980 1074,988 1082,998 1092,1000 1084,1014 1092,1020 1102,1026 1106,1044 1096,1062 1108,1070 1124,1086 1112,1098 1096,1110 1084,1096 1066,1096 1064,1110 1052,1118 1036,1132 1014,1128 1004,1114 996,1118 984,1110 960,1112 936,1116 914,1110 890,1104 876,1102 856,1104 836,1106 836,1124 844,1134 832,1142 814,1144 808,1160 800,1176 790,1186 786,1206 774,1208 778,1226 782,1236 768,1256 780,1262 790,1276 800,1288 824,1298 818,1310 816,1330 832,1352 822,1364 816,1378 814,1400 830,1412 832,1434 816,1444 812,1456 826,1466 828,1484 838,1498 822,1502 820,1520 814,1538 790,1540 760,1542 730,1542 722,1550 700,1550 680,1548 664,1546 658,1528 646,1520 656,1510 658,1500 640,1496 618,1492 620,1478 608,1466 584,1452 570,1438 548,1422 526,1412 500,1408 476,1404 458,1390 446,1380 428,1374 412,1370 400,1356 396,1344 368,1344 350,1330 336,1318 318,1308 300,1302 286,1296 284,1272 272,1268 266,1258 262,1262 244,1264 226,1260 214,1264 208,1270 190,1276 176,1266 160,1262 152,1254 144,1260 136,1272 122,1276 112,1270 60,1200 60,500 430,450 600,600Z"/>
<path transform="translate(600 1000) scale(.7653 .4783)" d="M564,105 550,107 552,130 546,160 530,160 524,146 518,150 514,140 508,152 502,132 500,66 468,66 464,80 452,92 442,80 425,68 415,80 402,104 385,110 376,124 364,112 356,100 340,96 350,88 342,84 352,72 342,70 334,58 324,64 312,60 302,72 296,62 286,66 270,54 268,76 258,92 246,102 242,96 240,120 230,124 224,142 214,152 210,180 204,184 208,200 206,230 202,256 190,256 180,248 170,258 160,248 154,240 146,246 150,262 158,284 166,300 168,318 158,320 162,340 178,344 184,360 200,374 214,390 236,384 248,392 254,410 262,430 266,470 256,470 252,450 250,430 244,428 244,446 236,458 230,466 232,480 240,476 238,490 246,496 240,520 242,534 236,560 242,580 236,604 222,626 210,654 200,650 190,640 182,654 164,658 150,670 142,682 130,676 124,682 106,682 104,694 88,698 72,696 66,674 50,670 46,662 38,662 30,676 32,700 40,714 44,740 48,772 56,776 60,800 56,832 70,834 74,860 90,858 100,848 112,840 122,826 136,812 150,808 160,812 164,824 172,812 182,806 184,762 196,764 206,752 220,750 236,758 248,754 254,740 266,758 274,754 278,740 288,740 290,730 296,754 304,766 312,770 316,790 310,802 298,804 304,816 302,828 314,846 322,860 336,864 340,876 350,886 370,888 386,888 392,910 408,906 430,912 440,930 446,946 452,964 466,962 476,946 480,932 486,938 500,936 506,924 530,918 544,908 560,912 580,906 592,894 612,866 634,870 638,900 650,890 658,896 668,884 686,884 700,902 714,894 730,892 742,894 746,884 758,896 770,900 768,930 780,936 784,960 780,970 788,1010 782,1040 770,1060 782,1072 790,1090 796,1110 818,1110 826,1130 832,1150 846,1162 850,1176 860,1180 868,1160 870,1130 878,1106 898,1092 908,1070 918,1055 926,1062 940,1066 944,1090 942,1128 950,1134 948,1164 964,1170 970,1190 986,1206 996,1194 1010,1192 1020,1182 1036,1186 1044,1182 1058,1198 1064,1220 1066,1240 1074,1260 1090,1252 1098,1280 1108,1310 1118,1330 1126,1356 1136,1366 1146,1380 1156,1370 1170,1386 1180,1400 1196,1430 1206,1426 1216,1400 1216,1370 1230,1366 1244,1354 1258,1360 1272,1370 1284,1350 1292,1335 1286,1312 1278,1296 1268,1270 1270,1250 1262,1230 1264,1218 1274,1224 1268,1200 1268,1172 1280,1170 1290,1180 1304,1176 1310,1160 1326,1146 1344,1124 1346,1104 1332,1090 1330,1050 1318,1030 1300,1018 1302,1010 1318,1016 1336,1026 1340,1010 1336,950 1326,940 1328,920 1320,890 1310,880 1290,874 1282,866 1274,860 1278,840 1268,820 1264,780 1252,774 1258,750 1270,736 1278,720 1278,690 1286,664 1276,640 1266,600 1270,560 1268,520 1274,490 1270,478 1258,480 1260,490 1252,476 1246,460 1236,434 1248,400 1244,370 1256,350 1268,330 1276,300 1284,292 1290,302 1304,270 1298,248 1284,236 1270,216 1258,212 1256,180 1260,130 1258,80 1254,50 1256,26 1257,-60 1000,-100 700,-160 620,-50Z"/>
<path transform="translate(1500 560) scale(.7398 .8546)" d="M80,268 93,267 108,267 120,272 134,278 160,275 176,286 196,283 204,287 214,282 228,290 244,284 262,286 284,286 300,280 318,274 336,272 342,268 356,264 370,262 382,257 390,264 398,270 402,258 414,256 424,250 434,244 450,244 452,212 466,204 484,196 506,190 526,186 534,178 536,170 540,160 538,112 530,108 546,102 566,98 592,98 606,103 616,103 616,88 628,72 630,56 638,45 656,46 672,48 690,48 706,48 722,42 728,26 752,24 758,36 760,60 764,90 768,116 756,122 742,130 744,146 740,158 748,170 756,190 766,196 772,210 768,245 780,256 800,267 826,268 846,274 860,276 884,280 904,284 908,290 950,340 880,500 620,530 463,487 447,487 436,491 428,483 426,472 418,476 403,474 387,474 372,471 356,483 350,497 343,507 335,508 323,499 310,494 296,488 281,493 269,501 254,507 242,497 234,492 221,497 217,504 207,503 194,507 182,515 172,524 157,525 147,531 124,529 114,526 103,528 91,525 81,529 63,521 48,516 33,512 23,516 17,511 8,510 -2,522 -8,530 -17,536 -33,528 -46,525 -62,518 -77,519 -95,517 -120,480 -120,380 60,268Z"/>
<path transform="translate(1500 560) scale(.7398 .8546)" d="M908,290 914,272 926,282 932,264 946,256 958,268 968,264 974,278 990,278 1006,284 1014,294 1026,288 1040,284 1038,268 1040,246 1052,242 1042,228 1036,212 1050,208 1058,194 1076,190 1092,184 1112,186 1134,192 1150,196 1172,204 1196,200 1212,198 1240,198 1258,196 1262,212 1272,228 1274,238 1258,252 1236,260 1244,266 1242,278 1262,282 1280,290 1298,294 1314,306 1330,312 1338,322 1332,334 1316,350 1318,370 1312,388 1326,388 1336,390 1340,404 1352,420 1354,430 1340,434 1326,446 1312,458 1326,468 1328,476 1350,478 1368,486 1384,500 1406,506 1416,520 1424,540 1428,552 1428,562 1444,576 1460,586 1480,592 1500,602 1512,612 1518,630 1524,650 1528,664 1520,682 1512,686 1520,700 1522,716 1530,738 1516,750 1508,772 1502,778 1486,792 1474,800 1450,800 1428,804 1424,824 1410,828 1390,830 1376,842 1378,852 1370,856 1354,838 1342,826 1316,828 1316,800 1308,784 1306,776 1286,776 1282,790 1270,802 1254,818 1234,812 1206,816 1190,820 1168,818 1150,820 1132,822 1126,814 1112,806 1106,800 1076,800 1050,804 1024,798 1000,794 980,786 956,778 936,784 904,782 884,784 880,774 866,778 858,768 848,766 836,778 830,786 816,786 808,780 786,782 782,792 772,804 762,818 750,826 732,824 716,826 704,832 694,820 680,814 666,816 644,804 628,812 608,818 592,812 574,802 568,792 558,804 544,810 524,810 518,830 508,832 492,820 476,806 458,790 444,774 432,766 412,754 398,758 390,748 376,736 364,738 348,742 332,742 334,710 342,690 340,664 350,654 358,638 368,618 380,622 392,628 416,628 430,620 440,604 446,592 456,580 444,576 442,568 456,568 468,560 488,544 500,550 508,554 514,542 518,520 508,508 494,506 464,502 462,490 466,485 480,479 494,478 504,464 520,459 538,456 552,450 562,438 568,434 580,440 594,440 602,456 618,459 630,459 644,464 656,458 668,458 684,464 700,466 714,466 722,465 738,472 760,477 776,472 794,470 808,462 824,452 834,444 834,430 822,422 808,412 804,404 808,388 814,372 826,364 846,360 860,354 872,348 884,346 904,350 908,340 918,332 926,318 944,322 930,326 922,306 910,300Z"/>
<path transform="translate(900 370) scale(.7653 .4464)" d="M192,68 197,76 205,70 213,76 222,88 230,93 236,86 243,91 250,85 258,86 265,80 268,60 275,68 285,66 293,72 302,76 310,84 320,92 330,88 335,78 342,84 350,74 357,82 360,96 368,90 375,100 378,108 388,106 394,104 398,118 404,128 404,144 412,138 420,134 424,150 434,154 441,160 440,180 436,194 442,214 452,220 462,226 466,236 476,240 480,256 481,272 482,290 490,288 498,298 506,286 514,292 518,270 527,264 530,240 538,236 544,244 556,240 560,252 567,264 572,254 582,244 590,254 600,262 610,270 620,264 628,274 640,272 644,256 650,246 656,226 664,222 674,230 684,220 690,232 688,252 686,264 694,264 700,254 708,242 716,238 726,242 730,230 742,238 752,230 764,232 776,230 775,220 780,244 786,286 790,296 788,310 794,330 794,346 806,346 814,350 822,338 830,342 832,330 836,350 836,376 842,392 854,400 858,430 862,470 866,520 870,560 862,564 852,570 848,590 846,612 854,630 856,652 852,690 862,696 860,720 856,740 864,760 864,790 872,826 872,850 862,856 854,850 850,842 844,856 830,850 824,856 825,882 834,890 842,884 858,890 872,886 874,910 875,938 862,942 862,960 858,985 848,1008 846,1055 838,1080 830,1100 820,1116 818,1150 820,1172 810,1170 802,1158 788,1164 780,1178 770,1176 762,1164 752,1160 740,1190 732,1200 710,1226 706,1260 705,1300 700,1330 692,1345 688,1372 683,1382 692,1400 692,1432 684,1440 674,1426 660,1420 650,1432 636,1430 632,1442 618,1446 604,1450 600,1462 588,1470 575,1484 562,1490 556,1476 550,1450 540,1442 530,1438 518,1428 514,1400 512,1370 516,1350 524,1332 531,1320 524,1318 518,1332 502,1336 495,1350 484,1362 470,1380 460,1376 454,1360 444,1344 432,1350 436,1324 420,1308 408,1300 402,1290 400,1270 404,1250 394,1254 390,1285 390,1310 388,1334 372,1336 355,1315 346,1300 334,1290 330,1278 320,1272 308,1245 306,1268 298,1288 284,1292 282,1330 280,1370 277,1440 262,1432 250,1420 235,1420 222,1408 220,1416 228,1430 224,1444 205,1446 204,1465 195,1480 190,1510 178,1524 168,1528 172,1500 168,1470 158,1440 148,1405 134,1396 126,1390 128,1360 124,1330 118,1318 120,1280 132,1276 136,1262 126,1240 118,1230 114,1240 102,1236 98,1200 106,1190 116,1160 126,1150 132,1120 130,1090 140,1075 148,1040 142,1012 156,1008 166,1012 176,1006 178,990 185,974 180,950 176,915 166,880 158,878 148,884 143,876 152,866 156,846 164,836 170,844 184,848 188,872 200,868 206,878 222,884 232,880 234,862 243,856 242,820 238,798 250,784 253,770 244,762 232,758 226,746 215,740 212,720 206,690 198,676 190,664 180,650 172,654 162,626 152,616 140,606 124,606 110,610 104,622 92,614 80,612 84,590 80,560 68,550 76,544 88,530 92,520 104,516 112,500 120,484 130,500 142,502 146,490 136,480 138,460 138,434 150,430 156,410 162,396 184,398 188,384 198,370 192,345 186,322 190,290 180,272 170,262 174,236 166,212 160,180 168,155 164,125 178,124 186,100Z"/>
</g>
<g class="city">
<text x="1323" y="732">宝鸡市</text><text x="1819" y="889">西安市</text><text x="2212" y="1070">商洛市</text><text x="1174" y="1285">汉中市</text><text x="1868" y="1530">安康市</text>
</g>
<circle cx="1358" cy="844" r="73" fill="#d7adb9"/>
<path fill="#fff" stroke="#222" stroke-width="2" d="M1358 845v29l6-5 6 13 5-2-5-13h8z"/>
</svg>
<footer class="switch">
<button class="now" aria-label="数据视图"><svg viewBox="0 0 20 20"><path fill="#b9d78a" stroke="#222" stroke-width="2" d="M3 2h14v15H3z"/><path stroke="#e8f4ff" stroke-width="3" d="M6 15c2-5 6-5 9-10"/></svg></button>
<button aria-label="布局视图"><svg viewBox="0 0 20 20"><path fill="#fff" stroke="#222" stroke-width="2" d="M4 3h8l4 4v11H4zM11 3v5h5M7 10h4M7 14h5"/></svg></button>
<i></i>
<button aria-label="刷新"><svg viewBox="0 0 20 20"><path fill="none" stroke="#345" stroke-width="2" d="M3 9c1-7 10-8 14-3M17 11c-1 7-10 8-14 3"/><path fill="#123" d="M18 2v7h-7zM2 18v-7h7z"/></svg></button>
<button aria-label="暂停"><svg viewBox="0 0 20 20"><path fill="#1d4585" d="M4 4h4v12H4zM12 4h4v12h-4z"/></svg></button>
<button class="left" aria-label="向左滚动"><svg viewBox="0 0 20 20"><path fill="none" stroke="#222" stroke-width="3" d="M14 4l-9 6 9 6"/></svg></button>
<div class="thumb"></div>
</footer>
</main>
</div>

<div class="status"><span>186865.768&nbsp; 3777784.584 米</span></div>

<section class="tool">
<header><h2>ArcToolbox</h2>
<button aria-label="最大化"><svg viewBox="0 0 20 20"><path fill="none" stroke="#111" stroke-width="2" d="M2 2h16v16H2z"/><path fill="#111" d="M1 1h18v4H1z"/></svg></button>
<button aria-label="关闭"><svg viewBox="0 0 20 20"><path fill="none" stroke="#111" stroke-width="3" d="M3 3l14 14M17 3L3 17"/></svg></button></header>
<div class="body">
<p><svg><use href="#tbf"/></svg>ArcToolbox</p>
<ul>
<li><button aria-label="展开"></button><svg><use href="#tbx"/></svg>3D Analyst 工具</li>
<li><button aria-label="展开"></button><svg><use href="#tbx"/></svg>Data Interoperability 工具</li>
<li><button aria-label="展开"></button><svg><use href="#tbx"/></svg>ENVI Tools</li>
<li><button aria-label="展开"></button><svg><use href="#tbx"/></svg>Geostatistical Analyst 工具</li>
<li><button aria-label="展开"></button><svg><use href="#tbx"/></svg>Network Analyst 工具</li>
<li><button aria-label="展开"></button><svg><use href="#tbx"/></svg>Schematics 工具</li>
<li><button aria-label="展开"></button><svg><use href="#tbx"/></svg>Spatial Analyst 工具</li>
<li><button aria-label="展开"></button><svg><use href="#tbx"/></svg>Tracking Analyst 工具</li>
<li><button aria-label="展开"></button><svg><use href="#tbx"/></svg>编辑工具</li>
<li><button aria-label="展开"></button><svg><use href="#tbx"/></svg>地理编码工具</li>
<li><button aria-label="展开"></button><svg><use href="#tbx"/></svg>多维工具</li>
<li><button aria-label="展开"></button><svg><use href="#tbx"/></svg>分析工具</li>
<li><button aria-label="展开"></button><svg><use href="#tbx"/></svg>服务器工具</li>
<li><button aria-label="展开"></button><svg><use href="#tbx"/></svg>空间统计工具</li>
<li><button aria-label="展开"></button><svg><use href="#tbx"/></svg>数据管理工具</li>
<li><button aria-label="展开"></button><svg><use href="#tbx"/></svg>线性参考工具</li>
<li><button aria-label="展开"></button><svg><use href="#tbx"/></svg>制图工具</li>
<li><button aria-label="展开"></button><svg><use href="#tbx"/></svg>转换工具</li>
<li><button aria-label="展开"></button><svg><use href="#tbx"/></svg>宗地结构工具</li>
</ul>
</div>
</section>
</div>
</div>
</body>
</html>
```
FILE: styles.css
```css
* { box-sizing: border-box; }
body { margin: 0; background: #000; color: #222; font: 24px "Noto Sans CJK SC", sans-serif; }
button, input { margin: 0; padding: 0; border: 0; background: none; font: inherit; color: inherit; }
.sprite { position: absolute; width: 0; height: 0; }
use { fill: none; stroke: #b2b2b2; stroke-width: 2px; }

/* black bands above and below the application */
.stage { height: 100vh; padding: 88px 0; display: flex; }
.app { position: relative; flex: 1; min-width: 0; display: flex; flex-direction: column; background: linear-gradient(90deg, #efefef, #f4f4f4 60%, #fafafa 85%); }

.menu { display: flex; gap: 30px; height: 44px; font-size: 25px; line-height: 28px; }
.menu a { color: #222; text-decoration: none; white-space: nowrap; }
.menu .first { width: 20px; display: flex; justify-content: flex-end; }

.row { display: flex; gap: 8px; height: 54px; padding-bottom: 2px; }
.second { gap: 9px; }
.bar { display: flex; flex: none; padding-top: 3px; background: linear-gradient(#fdfdfd, #ececec); }
.lead { padding-left: 4px; }
.away { margin-left: 46px; }
.snap { margin-left: 14px; }
.georef { margin-left: 138px; }
.sep { width: 12px; height: 30px; margin-top: 6px; background: linear-gradient(#a8a8a8, #a8a8a8) center / 2px 100% no-repeat; }
.grip { width: 14px; height: 30px; margin-top: 6px; background: radial-gradient(circle, #a6a6a6 2px, transparent 3px) 3px 0 / 8px 8px repeat-y; }
.b, .wide { display: flex; align-items: center; justify-content: center; width: 44px; height: 44px; flex: none; }
.b svg { width: 32px; height: 32px; flex: none; }
.on { background: #d5eafa; border: 2px solid #3c8dbc; }
.blue { background: #cfe6fa; border-color: #2468b4; }
.held { background: #e2e6ea; border: 2px solid #a5adb4; }
.wide { position: relative; width: 52px; }
.wide svg { width: 40px; height: 36px; }
.wide span { position: absolute; top: 3px; font-size: 30px; line-height: 26px; }
.serif { font-family: "Liberation Serif", serif; font-weight: 700; font-size: 28px; }
.big { font-size: 38px; }
.it { font-style: italic; }
.un { text-decoration: underline; }
.dd { width: 24px; height: 44px; }
.slim { width: 22px; }
.dd::before, .txt::after { content: ""; display: inline-block; border: 5px solid transparent; border-top: 7px solid #111; border-bottom: 0; vertical-align: middle; }
.dim::before { border-top-color: #a5a5a5; }
.txt { display: flex; align-items: center; justify-content: center; gap: 8px; height: 44px; white-space: nowrap; }
.editor { width: 136px; }
.draw { width: 114px; }
.adjust { width: 154px; }
.catch { width: 111px; }
.over { position: relative; width: 22px; height: 52px; margin: -3px 0 0 5px; background: linear-gradient(#f4f4f4, #9c9c9c); }
.over::before { content: ""; position: absolute; left: 6px; top: 33px; width: 10px; height: 2px; background: #111; }
.over::after { content: ""; position: absolute; left: 6px; top: 38px; border: 5px solid transparent; border-top: 7px solid #111; border-bottom: 0; }

.combo { display: flex; align-items: center; height: 45px; border: 2px solid #777; background: #fff; font-family: "Liberation Mono", "Noto Sans CJK SC", monospace; font-size: 27px; font-weight: 300; }
.combo input { flex: 1; min-width: 0; height: 40px; padding-left: 4px; }
.scale { width: 297px; }
.font { width: 344px; font-size: 28px; }
.font svg { width: 30px; height: 32px; margin-left: 4px; flex: none; }
.size { width: 92px; margin-right: 2px; }
.pct { width: 120px; margin: 0 0 0 2px; border-color: #c4c4c4; }
.num { width: 112px; }
.combo .picked { flex: none; width: 66px; height: 30px; margin-left: 4px; padding: 0; background: #0078d7; color: #3a6a98; }
.combo .light { width: 18px; color: #fff; }
.chev { flex: none; display: flex; align-items: center; justify-content: center; width: 40px; height: 40px; margin-left: auto; }
.chev::before { content: ""; width: 12px; height: 12px; margin-top: -8px; border: solid #555; border-width: 0 2px 2px 0; transform: rotate(45deg); }
.pct .chev::before { border-color: #aaa; }
.layer { width: 358px; height: 37px; margin: 2px 2px 0 0; background: #ebebeb; border: 3px solid #8b8b8b; border-bottom-color: #ddd; }
.drop { width: 30px; height: 31px; border: 2px solid #888; background: #f3f3f3; }
.drop::before { content: ""; display: block; margin: auto; width: 0; border: 6px solid transparent; border-top: 9px solid #999; border-bottom: 0; }

.work { flex: 1; min-height: 0; display: flex; gap: 9px; margin-top: -1px; }
.toc { width: 418px; flex: none; display: flex; flex-direction: column; }
.cap { display: flex; align-items: center; justify-content: flex-end; gap: 12px; height: 44px; padding-right: 7px; background: linear-gradient(90deg, #bfcedd, #d3e1ef); }
.cap button { display: flex; width: 20px; height: 24px; }
.tools { height: 52px; padding: 12px; background: linear-gradient(#fff, #ececec); }
.tools button { display: block; width: 28px; height: 30px; }
.tree { flex: 1; margin-right: 2px; padding-top: 48px; background: #fdfdfd; border: solid #8a8a8a; border-width: 2px 2px 2px 0; }
.sel { display: flex; justify-content: flex-end; width: 91px; height: 46px; padding-right: 3px; background: #0078d7; color: #fff; font-size: 30px; line-height: 44px; white-space: nowrap; }

.view { flex: 1; min-width: 0; display: flex; flex-direction: column; border: solid #6c6c6c; border-width: 3px 0 0 3px; }
.map { flex: 1; min-height: 0; width: 100%; display: block; background: #fdfdfd; }
.land path { vector-effect: non-scaling-stroke; fill: #cbe7f5; stroke: #3c4448; stroke-width: 2px; }
.city { font-size: 46px; font-weight: 300; fill: #111; text-anchor: middle; }

.switch { display: flex; height: 43px; padding-bottom: 3px; background: #f0f0f0; border-top: 3px solid #e6e6e6; border-bottom: 3px solid #fff; }
.switch button { display: flex; justify-content: center; align-items: center; width: 34px; height: 27px; }
.switch svg { width: 20px; height: 20px; }
.switch .now { width: 35px; background: #bfd7ed; }
.switch i { width: 2px; height: 26px; margin: 0 10px 0 4px; background: #999; }
.switch .left { height: 35px; }
.thumb { flex: 1; background: #c9c9c9; }

.status { display: flex; justify-content: flex-end; height: 31px; padding: 10px 31px 0 0; background: #ededed; overflow: hidden; font-size: 26px; line-height: 28px; white-space: nowrap; }

/* floating toolbox window */
.tool { position: absolute; top: 167px; right: 55px; bottom: 237px; width: 751px; padding: 7px 4px 4px 6px; display: flex; flex-direction: column; background: #f4f4f4; border-right: 2px solid #111; border-bottom: 2px solid #111; font-family: "Noto Sans", "Noto Sans CJK SC", sans-serif; }
.tool header { display: flex; align-items: center; gap: 14px; height: 43px; margin-bottom: 4px; padding: 0 8px; background: linear-gradient(90deg, #bccbdc, #d3e1ef); }
.tool h2 { flex: 1; margin: 0; font-size: 26px; font-weight: 400; }
.tool header button { display: flex; width: 20px; height: 20px; }
.body { flex: 1; padding-top: 1px; background: #fdfdfd; border: 2px solid #8c929a; }
.body p { display: flex; align-items: center; gap: 8px; height: 40px; margin: 0; padding-left: 10px; font-size: 26px; }
.body svg { width: 32px; height: 32px; flex: none; }
.body ul { margin: 0; padding: 0; list-style: none; }
.body li { display: flex; align-items: center; height: 40px; padding-left: 16px; white-space: nowrap; }
.body li svg { margin: 0 11px 0 12px; }
.body li button { width: 18px; height: 18px; margin-top: 4px; border: 2px solid #999; background: linear-gradient(#446, #446) center / 10px 2px no-repeat, linear-gradient(#446, #446) center / 2px 10px no-repeat, #fff; }
```
